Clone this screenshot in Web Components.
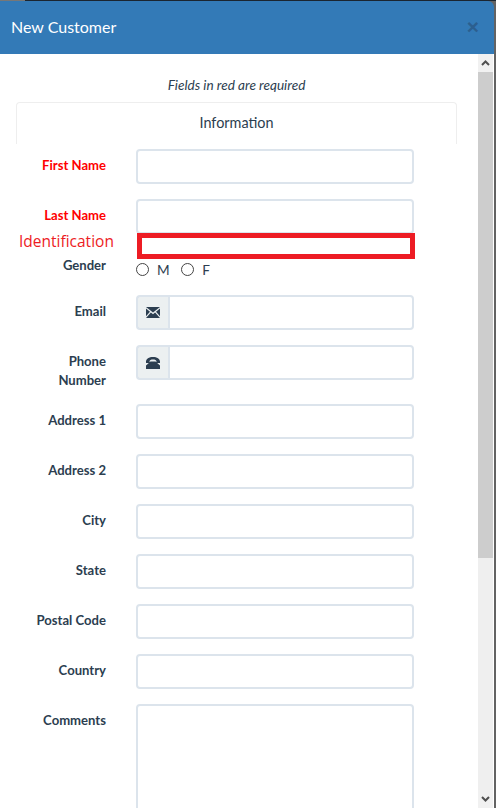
<!DOCTYPE html>
<html>
<head>
<meta charset="utf-8">
<title>New Customer</title>
<style>
  html, body { margin: 0; height: 100%; background: #636363; overflow: hidden; }
  body { font-family: Lato, "Liberation Sans", sans-serif; color: #2c3e50; font-size: 14px; }
</style>
</head>
<body>
<customer-modal heading="New Customer">
  <p class="note" slot="note">Fields in red are required</p>
  <info-panel heading="Information">
    <form-field label="First Name" required></form-field>
    <form-field label="Last Name" required></form-field>
    <gender-field label="Gender"></gender-field>
    <form-field label="Email" icon="mail"></form-field>
    <form-field label="Phone Number" icon="phone"></form-field>
    <form-field label="Address 1"></form-field>
    <form-field label="Address 2"></form-field>
    <form-field label="City"></form-field>
    <form-field label="State"></form-field>
    <form-field label="Postal Code"></form-field>
    <form-field label="Country"></form-field>
    <form-field label="Comments" multiline></form-field>
  </info-panel>
</customer-modal>

<script>
const ICONS = {
  mail: '<svg width="14" height="11" viewBox="0 0 14 11"><path fill="#2c3e50" d="M0 0h14L7 5.600zM0 1.400l4 3.300L0 9.300zM14 1.400l-4 3.300 4 4.600zM0 11l4.900-5.400L7 7.300l2.100-1.700L14 11z"/></svg>',
  phone: '<svg width="14" height="12" viewBox="0 0 14 12"><path fill="#2c3e50" d="M0 4.600C0 2 3 0 7 0s7 2 7 4.600V6H10.400V4.200C10.400 3.200 9 2.600 7 2.600s-3.400 .6-3.400 1.600V6H0zM4.500 4.400h5L14 8.500V12H0V8.500z"/></svg>'
};

class CustomerModal extends HTMLElement {
  connectedCallback() {
    this.attachShadow({ mode: 'open' }).innerHTML = `
      <style>
        :host { display: flex; flex-direction: column; height: 808px; box-sizing: border-box; padding: 1px 2px 0 0; position: relative; }
        .edge { position: absolute; top: 0; left: 0; right: 0; height: 1px; background: #1b2530; }
        .edge::before { content: ''; display: block; width: 25px; height: 1px; background: #777; }
        header { flex: none; height: 53px; background: #337ab7; border-top-right-radius: 6px; display: flex; align-items: center; justify-content: space-between; padding: 0 15px 2px 11px; box-sizing: border-box; }
        h4 { margin: 0; color: #fff; font-size: 16px; font-weight: 400; }
        .close { color: #2c5f8f; font-size: 21px; font-weight: 700; line-height: 1; font-family: "Liberation Sans", sans-serif; }
        main { flex: 1; min-height: 0; display: flex; background: #fff; }
        .content { flex: 1; min-width: 0; overflow: hidden; padding: 24px 21px 0 16px; }
        ::slotted(.note) { margin: 0 0 9px; height: 15px; line-height: 15px; text-align: center; font-style: italic; font-size: 13.600px; }
        .bar { flex: none; width: 15px; margin-right: 1px; background: #efefef; display: flex; flex-direction: column; }
        .btn { flex: none; height: 18px; background: #f1f1f1; display: flex; align-items: center; justify-content: center; }
        .thumb { flex: none; height: 486px; background: #cdcdcd; }
        .fill { flex: 1; }
      </style>
      <div class="edge"></div>
      <header><h4>${this.getAttribute('heading')}</h4><span class="close">×</span></header>
      <main>
        <div class="content"><slot name="note"></slot><slot></slot></div>
        <div class="bar">
          <div class="btn"><svg width="9" height="6" viewBox="0 0 9 6"><path d="M1 5l3.500-3.500L8 5" fill="none" stroke="#505050" stroke-width="2"/></svg></div>
          <div class="thumb"></div>
          <div class="fill"></div>
          <div class="btn"><svg width="9" height="6" viewBox="0 0 9 6"><path d="M1 1l3.500 3.500L8 1" fill="none" stroke="#505050" stroke-width="2"/></svg></div>
        </div>
      </main>`;
  }
}

class InfoPanel extends HTMLElement {
  connectedCallback() {
    this.attachShadow({ mode: 'open' }).innerHTML = `
      <style>
        :host { display: block; position: relative; }
        .head { height: 42px; box-sizing: border-box; border: 1px solid #eee; border-bottom: 0; border-radius: 4px 4px 0 0; text-align: center; font-size: 14.400px; line-height: 40px; }
        .body { padding-top: 5px; }
        .mark { position: absolute; left: 121px; top: 131px; width: 278px; height: 26px; box-sizing: border-box; border: 5px solid #ed1c24; }
        .tag { position: absolute; left: 3px; top: 129px; color: #ed1c24; font: 15.500px/20px "Open Sans", sans-serif; }
      </style>
      <div class="head">${this.getAttribute('heading')}</div>
      <div class="body"><slot></slot></div>
      <div class="tag">Identification</div>
      <div class="mark"></div>`;
  }
}

const FIELD_CSS = `
  :host { display: grid; grid-template-columns: 90px 278px; column-gap: 30px; margin-bottom: 15px; font-size: 14px; }
  label { box-sizing: border-box; padding-left: 15px; text-align: right; font-weight: 700; font-size: 13.100px; line-height: 19px; padding-top: 7px; margin-bottom: -1px; }
  :host([required]) label { color: #f00; }
`;

class FormField extends HTMLElement {
  connectedCallback() {
    const icon = this.getAttribute('icon');
    const multi = this.hasAttribute('multiline');
    this.attachShadow({ mode: 'open' }).innerHTML = `
      <style>
        ${FIELD_CSS}
        .group { display: flex; height: ${multi ? 150 : 35}px; }
        .addon { flex: none; width: 32px; box-sizing: border-box; background: #ecf0f1; border: 2px solid #dce4ec; border-right: 0; border-radius: 4px 0 0 4px; display: flex; align-items: center; justify-content: center; }
        input, textarea { flex: 1; min-width: 0; box-sizing: border-box; margin: 0; height: 100%; background: #fff; border: 2px solid #dce4ec; border-radius: 4px; outline: 0; resize: none; }
        .addon + input { border-radius: 0 4px 4px 0; }
      </style>
      <label>${this.getAttribute('label')}</label>
      <div class="group">
        ${icon ? `<span class="addon">${ICONS[icon]}</span>` : ''}
        ${multi ? '<textarea></textarea>' : '<input type="text">'}
      </div>`;
  }
}

class GenderField extends HTMLElement {
  connectedCallback() {
    this.attachShadow({ mode: 'open' }).innerHTML = `
      <style>
        ${FIELD_CSS}
        .opts { display: flex; align-items: center; height: 19px; margin: 11px 0 1px; font-size: 13.600px; }
        .dot { width: 13px; height: 13px; box-sizing: border-box; border: 1px solid #444; border-radius: 50%; margin-right: 8px; }
        .opt { margin-right: 11.500px; display: flex; align-items: center; }
      </style>
      <label>${this.getAttribute('label')}</label>
      <div class="opts">
        <span class="opt"><span class="dot"></span>M</span>
        <span class="opt"><span class="dot"></span>F</span>
      </div>`;
  }
}

customElements.define('customer-modal', CustomerModal);
customElements.define('info-panel', InfoPanel);
customElements.define('form-field', FormField);
customElements.define('gender-field', GenderField);
</script>
</body>
</html>
